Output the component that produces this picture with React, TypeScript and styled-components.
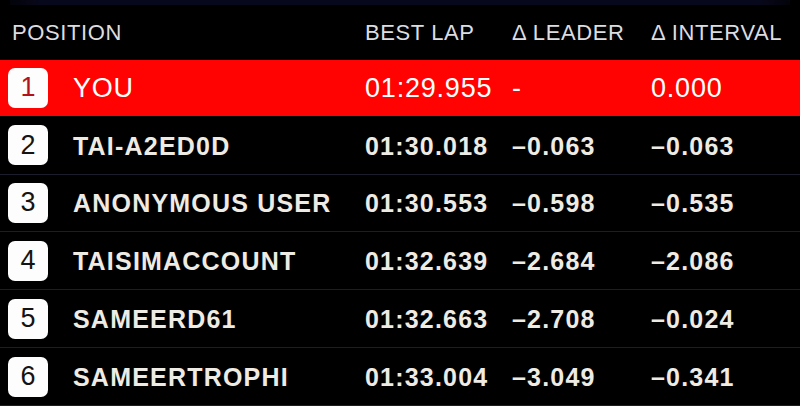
import React from 'react';
import styled, { createGlobalStyle } from 'styled-components';

type Entry = {
  pos: number;
  name: string;
  lap: string;
  leader: string;
  interval: string;
};

const entries: Entry[] = [
  { pos: 1, name: 'YOU', lap: '01:29.955', leader: '-', interval: '0.000' },
  { pos: 2, name: 'TAI-A2ED0D', lap: '01:30.018', leader: '–0.063', interval: '–0.063' },
  { pos: 3, name: 'ANONYMOUS USER', lap: '01:30.553', leader: '–0.598', interval: '–0.535' },
  { pos: 4, name: 'TAISIMACCOUNT', lap: '01:32.639', leader: '–2.684', interval: '–2.086' },
  { pos: 5, name: 'SAMEERD61', lap: '01:32.663', leader: '–2.708', interval: '–0.024' },
  { pos: 6, name: 'SAMEERTROPHI', lap: '01:33.004', leader: '–3.049', interval: '–0.341' },
];

const GlobalStyle = createGlobalStyle`
  html, body {
    margin: 0;
    padding: 0;
    background: #000;
  }
  body {
    font-family: "Liberation Sans", Arial, sans-serif;
    width: 800px;
    height: 406px;
    overflow: hidden;
  }
`;

const App = () => {
  return (
    <Board>
      <GlobalStyle />
      <TopGlow />
      <HeaderRow>
        <HeadCell>POSITION</HeadCell>
        <HeadCell>BEST LAP</HeadCell>
        <HeadCell>Δ LEADER</HeadCell>
        <HeadCell>Δ INTERVAL</HeadCell>
      </HeaderRow>
      {entries.map((e) => {
        const me = e.pos === 1;
        return (
          <Row key={e.pos} $me={me}>
            <PosCell>
              <Badge $me={me}>{e.pos}</Badge>
              <Cell $me={me}>{e.name}</Cell>
            </PosCell>
            <Cell $me={me}>{e.lap}</Cell>
            <Cell $me={me}>{e.leader}</Cell>
            <Cell $me={me}>{e.interval}</Cell>
          </Row>
        );
      })}
    </Board>
  );
};

export default App;

const Board = styled.div`
  width: 800px;
  height: 406px;
  background: #000;
  display: flex;
  flex-direction: column;
  overflow: hidden;
`;

const TopGlow = styled.div`
  height: 5px;
  margin: 0 10px;
  background: linear-gradient(
    to right,
    rgba(10, 10, 32, 0.3),
    #08081c 4%,
    #08081c 96%,
    rgba(10, 10, 32, 0.3)
  );
`;

const HeaderRow = styled.div`
  display: grid;
  grid-template-columns: 353px 147px 139px 1fr;
  align-items: center;
  height: 54px;
  padding-left: 12px;
`;

const HeadCell = styled.div`
  font-size: 22px;
  color: #dcdde0;
  letter-spacing: 0.6px;
  padding-top: 2px;
`;

const Row = styled.div<{ $me: boolean }>`
  display: grid;
  grid-template-columns: 365px 147px 139px 1fr;
  align-items: center;
  height: ${(p) => (p.$me ? '56px' : '57px')};
  background: ${(p) => (p.$me ? '#ff0303' : '#000')};
  border-bottom: 1px solid ${(p) => (p.$me ? '#000' : '#1b1d2c')};
  margin-top: ${(p) => (p.$me ? '1px' : '0')};
`;

const PosCell = styled.div`
  display: flex;
  align-items: center;
  padding-left: 8px;
  gap: 25px;
`;

const Badge = styled.div<{ $me: boolean }>`
  width: 40px;
  height: 40px;
  border-radius: 7px;
  background: #fdfdfd;
  color: ${(p) => (p.$me ? '#b3121a' : '#141414')};
  font-size: 27px;
  display: flex;
  align-items: center;
  justify-content: center;
  line-height: 1;
`;

const Cell = styled.div<{ $me: boolean }>`
  color: ${(p) => (p.$me ? '#ffffff' : '#eeebe4')};
  font-weight: ${(p) => (p.$me ? 400 : 700)};
  font-size: ${(p) => (p.$me ? '27px' : '25px')};
  letter-spacing: ${(p) => (p.$me ? '0.8px' : '1.2px')};
  white-space: nowrap;
  line-height: 1;
  padding-top: 2px;
`;
